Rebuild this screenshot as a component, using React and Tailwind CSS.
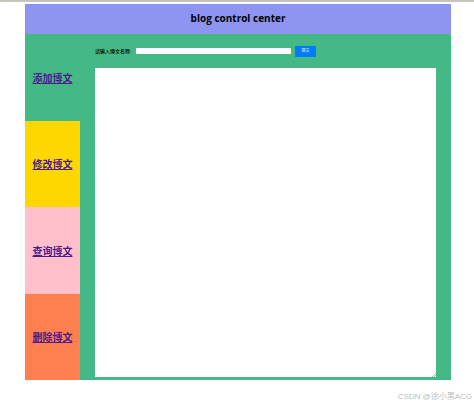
const cjk = "font-['Liberation_Sans','Noto_Sans_CJK_SC',sans-serif]";

function NavItem({ bg, children }) {
  return (
    <div className={`flex-1 flex items-center justify-center pt-[3px] ${bg}`}>
      <a href="#" className="text-[10px] font-bold leading-none underline text-[#4b1a8c]">{children}</a>
    </div>
  );
}

export default function App() {
  return (
    <div className={`relative w-[474px] h-[405px] overflow-hidden bg-white flex flex-col ${cjk}`}>
      <div className="h-[2px] bg-[#c6c3bf]" />
      <div className="mt-[2px] ml-[25px] w-[426px] h-[376px] flex flex-col">
        <div className="h-[30px] bg-[#8e95f0] flex items-center justify-center pb-[1px]">
          <h1 className="text-[10px] font-bold text-black font-['Open_Sans',sans-serif]">blog control center</h1>
        </div>
        <div className="flex-1 flex bg-[#45b985] min-h-0">
          <div className="w-[55px] flex flex-col">
            <NavItem bg="bg-[#45b985]">添加博文</NavItem>
            <NavItem bg="bg-[#ffd700]">修改博文</NavItem>
            <NavItem bg="bg-[#ffc0cb]">查询博文</NavItem>
            <NavItem bg="bg-[#ff7f50]">删除博文</NavItem>
          </div>
          <div className="ml-[15px] w-[341px] flex flex-col">
            <div className="h-[33px] flex items-center pt-[1px]">
              <span className="w-[41px] text-[5px] font-medium leading-none text-black whitespace-nowrap">请输入博文名称:</span>
              <div className="w-[155px] h-[6px] bg-white" />
              <button className="ml-[4px] w-[21px] h-[11px] rounded-[1px] bg-[#007bff] text-white text-[4px] leading-none flex items-center justify-center">提交</button>
            </div>
            <div className="relative h-[310px] bg-white border-t border-[#6aa88c]">
              <svg className="absolute right-0 bottom-0" width="4" height="4" viewBox="0 0 4 4">
                <path d="M0 4L4 0M2 4L4 2" stroke="#8a8a8a" strokeWidth="0.6" />
              </svg>
            </div>
          </div>
        </div>
      </div>
      <span className="absolute right-[2px] bottom-[4px] text-[8px] leading-none text-[#bdbdbd] whitespace-nowrap">CSDN @徐小黑ACG</span>
    </div>
  );
}
